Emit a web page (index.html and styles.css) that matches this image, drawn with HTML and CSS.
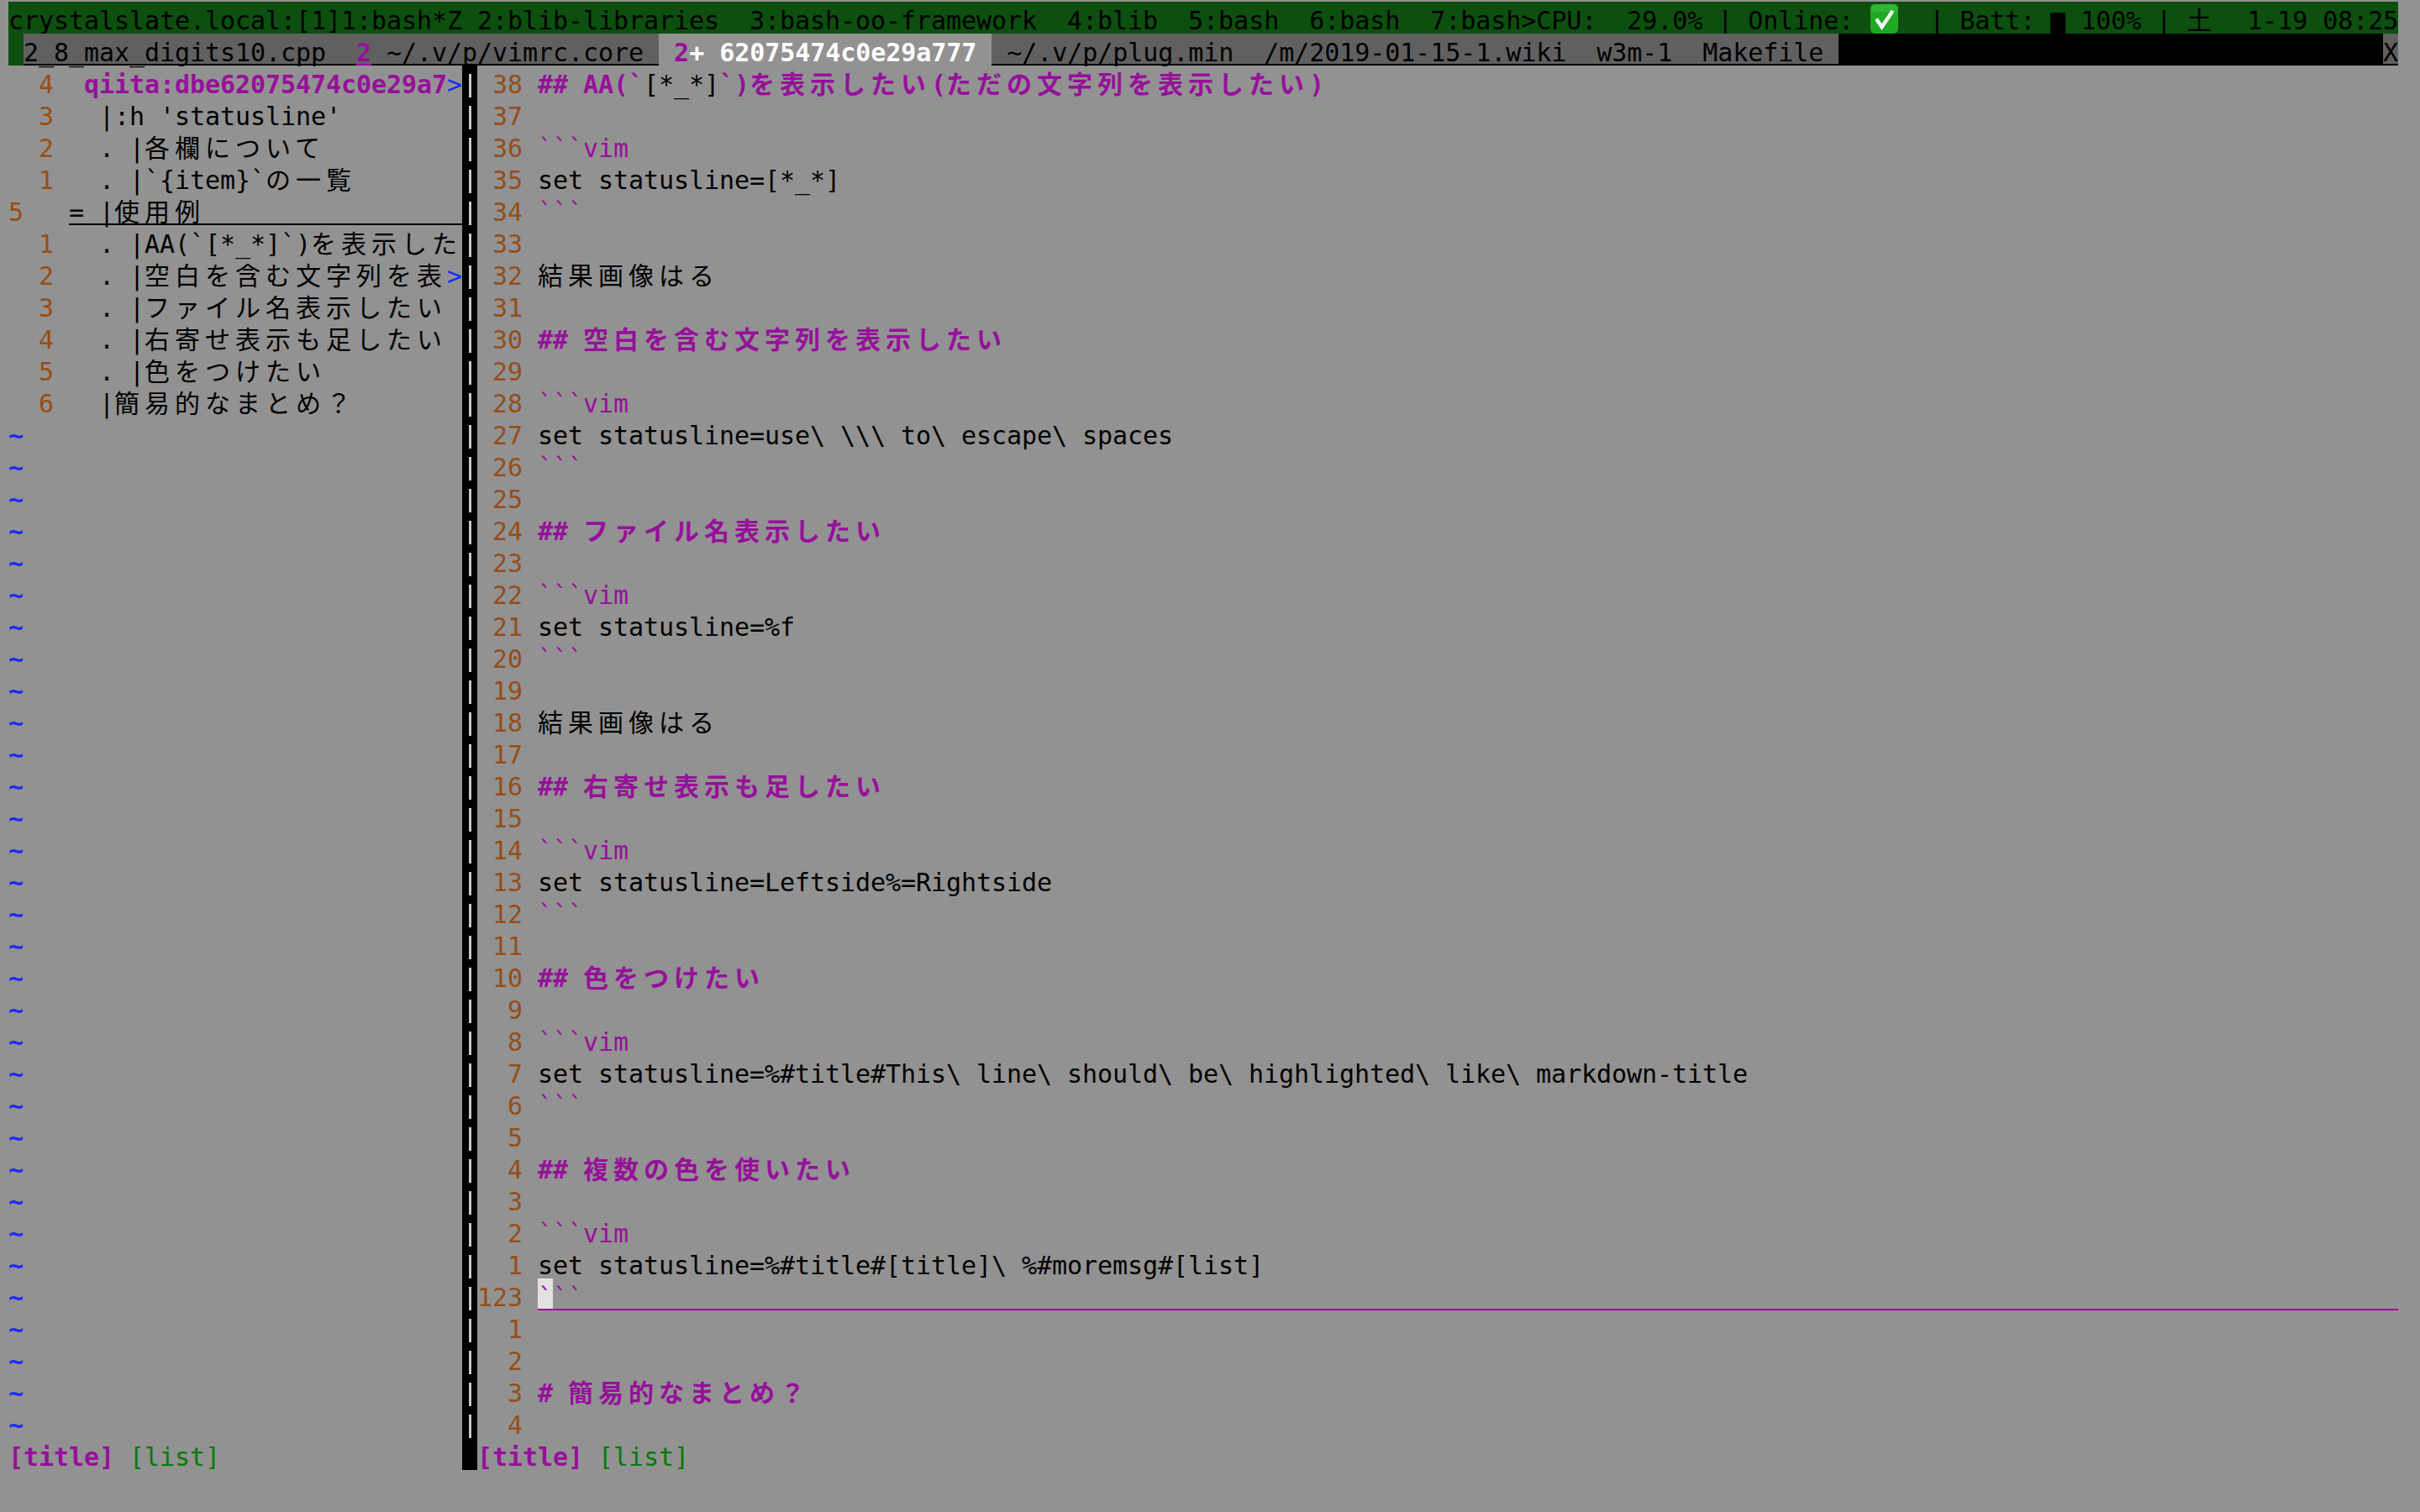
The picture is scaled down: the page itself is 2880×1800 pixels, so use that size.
FILE: index.html
```html
<!DOCTYPE html>
<html lang="ja">
<head>
<meta charset="utf-8">
<title>tmux vim</title>
<link rel="stylesheet" href="styles.css">
</head>
<body>
<div class="term">
<div class="row tmux"><span>crystalslate.local:[1]1:bash*Z 2:blib-libraries  3:bash-oo-framework  4:blib  5:bash  6:bash  7:bash&gt;CPU:  29.0% | Online: </span><svg class="emoji" viewBox="0 0 36 38" aria-hidden="true"><rect x="2" y="3" width="33" height="35" rx="6" fill="#1fa924"/><rect x="2" y="3" width="33" height="9" rx="5" fill="#3cc23f" opacity=".55"/><path d="M9 20.5l6.5 9.5L28.5 11" fill="none" stroke="#f4f7f4" stroke-width="4.4" stroke-linejoin="miter"/></svg><span>  | Batt: <i class="batt"></i> 100% | <b class="j plain">土</b>  1-19 08:25</span></div>
<div class="row tabs"><span class="t0"> </span><span class="tab">2_8_max_digits10.cpp  <b class="tabn">2</b> ~/.v/p/vimrc.core </span><span class="act"> <b class="mg">2</b><b>+ 62075474c0e29a777 </b></span><span class="tab"> ~/.v/p/plug.min  /m/2019-01-15-1.wiki  w3m-1  Makefile </span><span class="fill"></span><span class="tab">X</span></div>
<div class="panes">
<div class="pane left">
<div class="r"><span class="n">4</span><span class="t"> <b class="mg">qiita:dbe62075474c0e29a7</b><span class="bl">&gt;</span></span></div>
<div class="r"><span class="n">3</span><span class="t">  |:h 'statusline'</span></div>
<div class="r"><span class="n">2</span><span class="t">  . |<span class="j">各欄について</span></span></div>
<div class="r"><span class="n">1</span><span class="t">  . |`{item}`<span class="j">の一覧</span></span></div>
<div class="r"><span class="n nl">5</span><span class="t cl">= |<span class="j">使用例</span></span></div>
<div class="r"><span class="n">1</span><span class="t">  . |AA(`[*_*]`)<span class="j">を表示した</span></span></div>
<div class="r"><span class="n">2</span><span class="t">  . |<span class="j">空白を含む文字列を表</span><span class="bl">&gt;</span></span></div>
<div class="r"><span class="n">3</span><span class="t">  . |<span class="j">ファイル名表示したい</span></span></div>
<div class="r"><span class="n">4</span><span class="t">  . |<span class="j">右寄せ表示も足したい</span></span></div>
<div class="r"><span class="n">5</span><span class="t">  . |<span class="j">色をつけたい</span></span></div>
<div class="r"><span class="n">6</span><span class="t">  |<span class="j">簡易的なまとめ？</span></span></div>
<div class="r tl">~</div><div class="r tl">~</div><div class="r tl">~</div><div class="r tl">~</div>
<div class="r tl">~</div><div class="r tl">~</div><div class="r tl">~</div><div class="r tl">~</div>
<div class="r tl">~</div><div class="r tl">~</div><div class="r tl">~</div><div class="r tl">~</div>
<div class="r tl">~</div><div class="r tl">~</div><div class="r tl">~</div><div class="r tl">~</div>
<div class="r tl">~</div><div class="r tl">~</div><div class="r tl">~</div><div class="r tl">~</div>
<div class="r tl">~</div><div class="r tl">~</div><div class="r tl">~</div><div class="r tl">~</div>
<div class="r tl">~</div><div class="r tl">~</div><div class="r tl">~</div><div class="r tl">~</div>
<div class="r tl">~</div><div class="r tl">~</div><div class="r tl">~</div><div class="r tl">~</div>
<div class="st"><b class="mg">[title]</b> <span class="gr">[list]</span></div>
</div>
<div class="sep"><div class="dash"></div></div>
<div class="pane right">
<div class="r"><span class="n">38</span><span class="t"><b class="mg">## AA(`</b>[*_*]<b class="mg">`)<span class="j">を表示したい</span>(<span class="j">ただの文字列を表示したい</span>)</b></span></div>
<div class="r"><span class="n">37</span></div>
<div class="r"><span class="n">36</span><span class="t mg">```vim</span></div>
<div class="r"><span class="n">35</span><span class="t">set statusline=[*_*]</span></div>
<div class="r"><span class="n">34</span><span class="t mg">```</span></div>
<div class="r"><span class="n">33</span></div>
<div class="r"><span class="n">32</span><span class="t"><span class="j">結果画像はる</span></span></div>
<div class="r"><span class="n">31</span></div>
<div class="r"><span class="n">30</span><span class="t"><b class="mg">## <span class="j">空白を含む文字列を表示したい</span></b></span></div>
<div class="r"><span class="n">29</span></div>
<div class="r"><span class="n">28</span><span class="t mg">```vim</span></div>
<div class="r"><span class="n">27</span><span class="t">set statusline=use\ \\\ to\ escape\ spaces</span></div>
<div class="r"><span class="n">26</span><span class="t mg">```</span></div>
<div class="r"><span class="n">25</span></div>
<div class="r"><span class="n">24</span><span class="t"><b class="mg">## <span class="j">ファイル名表示したい</span></b></span></div>
<div class="r"><span class="n">23</span></div>
<div class="r"><span class="n">22</span><span class="t mg">```vim</span></div>
<div class="r"><span class="n">21</span><span class="t">set statusline=%f</span></div>
<div class="r"><span class="n">20</span><span class="t mg">```</span></div>
<div class="r"><span class="n">19</span></div>
<div class="r"><span class="n">18</span><span class="t"><span class="j">結果画像はる</span></span></div>
<div class="r"><span class="n">17</span></div>
<div class="r"><span class="n">16</span><span class="t"><b class="mg">## <span class="j">右寄せ表示も足したい</span></b></span></div>
<div class="r"><span class="n">15</span></div>
<div class="r"><span class="n">14</span><span class="t mg">```vim</span></div>
<div class="r"><span class="n">13</span><span class="t">set statusline=Leftside%=Rightside</span></div>
<div class="r"><span class="n">12</span><span class="t mg">```</span></div>
<div class="r"><span class="n">11</span></div>
<div class="r"><span class="n">10</span><span class="t"><b class="mg">## <span class="j">色をつけたい</span></b></span></div>
<div class="r"><span class="n">9</span></div>
<div class="r"><span class="n">8</span><span class="t mg">```vim</span></div>
<div class="r"><span class="n">7</span><span class="t">set statusline=%#title#This\ line\ should\ be\ highlighted\ like\ markdown-title</span></div>
<div class="r"><span class="n">6</span><span class="t mg">```</span></div>
<div class="r"><span class="n">5</span></div>
<div class="r"><span class="n">4</span><span class="t"><b class="mg">## <span class="j">複数の色を使いたい</span></b></span></div>
<div class="r"><span class="n">3</span></div>
<div class="r"><span class="n">2</span><span class="t mg">```vim</span></div>
<div class="r"><span class="n">1</span><span class="t">set statusline=%#title#[title]\ %#moremsg#[list]</span></div>
<div class="r"><span class="n">123</span><span class="t mg cur"><span class="cc">`</span>``</span></div>
<div class="r"><span class="n">1</span></div>
<div class="r"><span class="n">2</span></div>
<div class="r"><span class="n">3</span><span class="t"><b class="mg"># <span class="j">簡易的なまとめ？</span></b></span></div>
<div class="r"><span class="n">4</span></div>
<div class="st"><b class="mg">[title]</b> <span class="gr">[list]</span></div>
</div>
</div>
</div>
</body>
</html>
```
FILE: styles.css
```css
html, body {
  margin: 0;
  background: #929292;
}
.term {
  --c: 18px;
  --rh: 38px;
  --pad: 7px;
  width: 2844px;
  padding: 2px 10px 0;
  font-family: "DejaVu Sans Mono", "Noto Sans CJK JP", monospace;
  font-size: 30px;
  letter-spacing: -0.06px;
  line-height: 31px;
  color: #000;
}
.row, .r, .st {
  box-sizing: border-box;
  height: var(--rh);
  white-space: pre;
}
.row, .r { display: flex; }
.r, .st { padding-top: var(--pad); }
.row > * {
  box-sizing: border-box;
  height: var(--rh);
  padding-top: var(--pad);
}
.tmux { background: #0c4f0f; }
.row > .emoji {
  width: 36px;
  flex: none;
  padding: 0;
}
.batt {
  display: inline-block;
  width: 18px;
  height: 25px;
  background: #000;
  vertical-align: -5px;
}
.tabs { background: #0c4f0f; }
.t0 { width: var(--c); }
.tab {
  background: #606060;
  box-shadow: inset 0 -2px 0 #000;
}
.tabn {
  color: #96109a;
  font-weight: bold;
  display: inline-block;
  box-shadow: inset 0 -2px 0 #96109a;
}
.act {
  color: #fff;
  background: #929292;
}
.fill {
  flex: 1;
  background: #000;
}
.mg { color: #96109a; }
.bl { color: #1a2cf0; }
.gr { color: #0a780a; }
.panes { display: flex; }
.pane.left { width: 540px; flex: none; }
.pane.right { flex: 1; min-width: 0; }
.sep {
  width: var(--c);
  flex: none;
  background: #000;
  display: flex;
  justify-content: center;
  padding-bottom: var(--rh);
}
.dash {
  width: 3px;
  background: repeating-linear-gradient(to bottom, transparent 0, transparent 10px, #c8c8c8 10px, #c8c8c8 38px);
}
.n {
  width: calc(var(--c) * 3);
  margin-right: var(--c);
  text-align: right;
  color: #964d16;
  flex: none;
}
.nl { text-align: left; }
.t { flex: 1; min-width: 0; }
.cl { box-shadow: inset 0 -2px 0 #000; }
.tl {
  color: #1a2cf0;
  font-weight: bold;
}
.j {
  font-family: "Noto Sans CJK JP", sans-serif;
  letter-spacing: 6px;
  line-height: 0;
}
.plain { font-weight: normal; }
.cur { box-shadow: inset 0 -2px 0 #96109a; }
.cc {
  display: inline-block;
  box-sizing: border-box;
  height: var(--rh);
  margin-top: calc(0px - var(--pad));
  padding-top: var(--pad);
  background: #e2e2e2;
  box-shadow: inset 0 -2px 0 #96109a;
  width: var(--c);
}
```
